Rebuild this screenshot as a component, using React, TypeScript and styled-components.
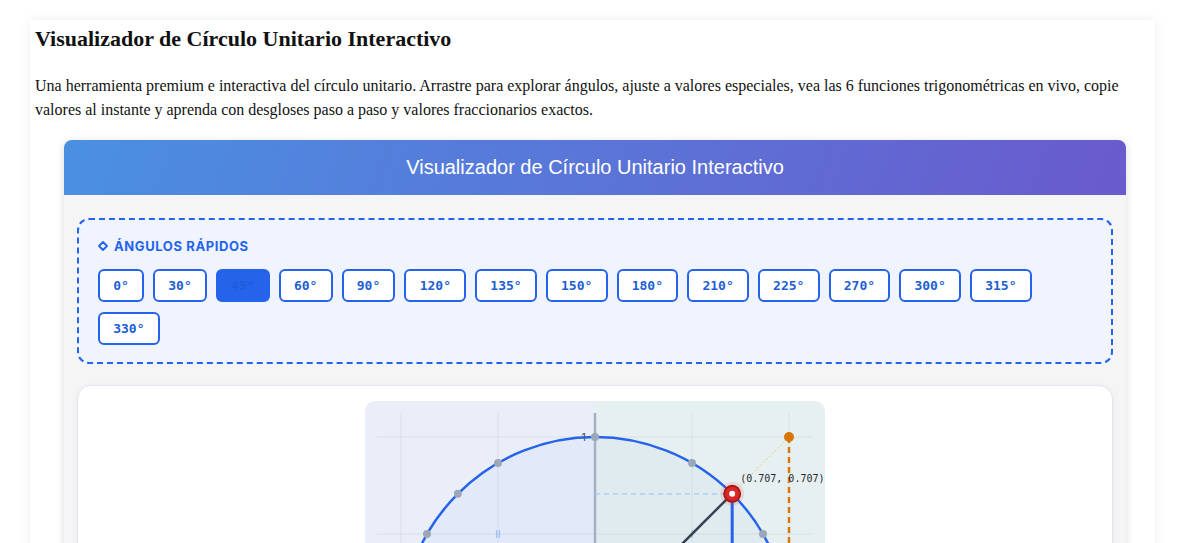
import React from 'react';
import styled, { createGlobalStyle } from 'styled-components';

const GlobalStyle = createGlobalStyle`
  html, body {
    margin: 0;
    padding: 0;
    background: #ffffff;
  }
  body {
    font-family: "Liberation Serif", "Times New Roman", serif;
    color: #111;
  }
`;

// right padding leaves room where the reference shows the page scrollbar
const Page = styled.div`
  padding: 20px 45px 40px 30px;
`;

const Article = styled.article`
  background: #fff;
  padding: 5px;
  box-shadow: 0 0 10px rgba(0, 0, 0, 0.08);
`;

const PageTitle = styled.h2`
  font-size: 22px;
  font-weight: 700;
  line-height: 27px;
  margin: 0 0 22px;
`;

const Intro = styled.p`
  font-size: 16px;
  line-height: 24px;
  margin: 0;
`;

const Widget = styled.section`
  margin: 18px 24px 0 29px;
  border-radius: 8px;
  overflow: hidden;
  background: #f5f5f5;
  box-shadow: 0 2px 8px rgba(0, 0, 0, 0.15);
`;

const Header = styled.header`
  background: linear-gradient(110deg, #4a90e2 0%, #6a5acd 100%);
  color: #fff;
  text-align: center;
  font-family: "Liberation Sans", Arial, sans-serif;
  font-size: 20px;
  line-height: 23px;
  padding: 16px;
`;

const Body = styled.div`
  padding: 23px 13px 30px;
`;

const QuickPanel = styled.div`
  border: 2px dashed #2563eb;
  border-radius: 12px;
  background: #eff4fe;
  padding: 18px 19px 17px;
`;

const QuickLabel = styled.div`
  display: flex;
  align-items: center;
  gap: 6px;
  font-family: Inter, "Noto Sans", sans-serif;
  font-weight: 700;
  font-size: 13px;
  line-height: 16px;
  letter-spacing: 0.6px;
  color: #2563eb;
  margin-bottom: 15px;
`;

const AngleGrid = styled.div`
  display: flex;
  flex-wrap: wrap;
  gap: 10px 9px;
`;

const AngleButton = styled.button<{ $active?: boolean }>`
  box-sizing: border-box;
  height: 33px;
  padding: 0 13.2px;
  border: 2px solid #2563eb;
  border-radius: 6px;
  background: ${(p) => (p.$active ? '#2563eb' : '#ffffff')};
  color: ${(p) => (p.$active ? '#1e5ddb' : '#1d5fd4')};
  font-family: "DejaVu Sans Mono", "Liberation Mono", monospace;
  font-weight: 700;
  font-size: 13px;
  cursor: pointer;
`;

const CircleCard = styled.div`
  margin-top: 21px;
  background: #fff;
  border: 1px solid #e1e5f0;
  border-radius: 14px;
  padding: 15px;
  box-shadow: 0 2px 8px rgba(0, 0, 0, 0.05);
`;

const Canvas = styled.svg`
  display: block;
  margin: 0 auto;
  border-radius: 10px;
`;

const angles = [0, 30, 45, 60, 90, 120, 135, 150, 180, 210, 225, 270, 300, 315, 330];
const special = [0, 30, 60, 90, 120, 135, 150, 180, 210, 225, 240, 270, 300, 315, 330];

const Diamond = () => (
  <svg width="10" height="10" viewBox="0 0 10 10">
    <path d="M5 1 L9 5 L5 9 L1 5 Z" fill="none" stroke="#2563eb" strokeWidth="1.8" strokeLinejoin="round" />
  </svg>
);

const UnitCircle: React.FC<{ angle: number }> = ({ angle }) => {
  const S = 460;
  const c = 230;
  const r = 194;
  const rad = (angle * Math.PI) / 180;
  const px = c + r * Math.cos(rad);
  const py = c - r * Math.sin(rad);
  const ty = c - r * Math.tan(rad);
  const grid = [c - r, c - r / 2, c + r / 2, c + r];

  return (
    <Canvas width={S} height={S} viewBox={`0 0 ${S} ${S}`}>
      <rect x="0" y="0" width={c} height={c} fill="#e9eef9" />
      <rect x={c} y="0" width={c} height={c} fill="#e7f0f1" />
      <rect x="0" y={c} width={c} height={c} fill="#f1edf9" />
      <rect x={c} y={c} width={c} height={c} fill="#f7f0e9" />

      {grid.map((g) => (
        <g key={g}>
          <line x1={g} y1="12" x2={g} y2={S - 12} stroke="rgba(148,163,184,0.18)" strokeWidth="1" />
          <line x1="12" y1={g} x2={S - 12} y2={g} stroke="rgba(148,163,184,0.18)" strokeWidth="1" />
        </g>
      ))}

      <text x={c - r / 2} y={c - r / 2 + 4} fontSize="10" fill="#93b4f5" textAnchor="middle" fontFamily="Inter, sans-serif">II</text>
      <text x={c + r / 2} y={c - r / 2 + 4} fontSize="10" fill="#8fd3b8" textAnchor="middle" fontFamily="Inter, sans-serif">I</text>
      <text x={c - r / 2} y={c + r / 2 + 4} fontSize="10" fill="#c4b5fd" textAnchor="middle" fontFamily="Inter, sans-serif">III</text>
      <text x={c + r / 2} y={c + r / 2 + 4} fontSize="10" fill="#fdba74" textAnchor="middle" fontFamily="Inter, sans-serif">IV</text>

      <circle cx={c} cy={c} r={r} fill="rgba(37,99,235,0.03)" stroke="#2563eb" strokeWidth="2.5" />

      <line x1={c} y1="12" x2={c} y2={S - 12} stroke="#a3afc2" strokeWidth="2.5" />
      <line x1="12" y1={c} x2={S - 12} y2={c} stroke="#a3afc2" strokeWidth="2.5" />
      <text x={c - 9} y={c - r + 4} fontSize="11" fill="#4b5563" textAnchor="end" fontFamily="Inter, sans-serif">1</text>
      <text x={c + r + 6} y={c + 14} fontSize="11" fill="#4b5563" fontFamily="Inter, sans-serif">1</text>

      {special.map((a) => {
        const t = (a * Math.PI) / 180;
        return <circle key={a} cx={c + r * Math.cos(t)} cy={c - r * Math.sin(t)} r="4" fill="#9ca8ba" />;
      })}

      <line x1={c} y1={py} x2={px} y2={py} stroke="#a9c8f7" strokeWidth="1.2" strokeDasharray="5 4" />
      <line x1={c} y1={c} x2={px} y2={c} stroke="#dc2626" strokeWidth="3" />
      <line x1={px} y1={py} x2={px} y2={c} stroke="#2563eb" strokeWidth="3" />
      <line x1={c} y1={c} x2={px} y2={py} stroke="#374151" strokeWidth="2.5" />

      <line x1={px} y1={py} x2={c + r} y2={ty} stroke="#f2c48d" strokeWidth="1" strokeDasharray="2 2" />
      <line x1={c + r} y1={ty} x2={c + r} y2={c} stroke="#d97706" strokeWidth="2.5" strokeDasharray="6 4" />
      <circle cx={c + r} cy={ty} r="5" fill="#d97706" />

      <circle cx={px} cy={py} r="12" fill="rgba(220,38,38,0.12)" />
      <circle cx={px} cy={py} r="8" fill="#dc2626" stroke="#a51b1b" strokeWidth="2" />
      <circle cx={px} cy={py} r="3" fill="#ffffff" />

      <text x={px + 8} y={py - 12} fontSize="10" fill="#1f2937" fontFamily="'DejaVu Sans Mono', monospace">
        ({Math.cos(rad).toFixed(3)}, {Math.sin(rad).toFixed(3)})
      </text>
    </Canvas>
  );
};

const App: React.FC = () => {
  const active = 45;
  return (
    <>
      <GlobalStyle />
      <Page>
        <Article>
          <PageTitle>Visualizador de Círculo Unitario Interactivo</PageTitle>
          <Intro>
            Una herramienta premium e interactiva del círculo unitario. Arrastre para explorar ángulos, ajuste a
            valores especiales, vea las 6 funciones trigonométricas en vivo, copie valores al instante y aprenda con
            desgloses paso a paso y valores fraccionarios exactos.
          </Intro>
          <Widget>
            <Header>Visualizador de Círculo Unitario Interactivo</Header>
            <Body>
              <QuickPanel>
                <QuickLabel>
                  <Diamond />
                  ÁNGULOS RÁPIDOS
                </QuickLabel>
                <AngleGrid>
                  {angles.map((a) => (
                    <AngleButton key={a} $active={a === active}>
                      {a}°
                    </AngleButton>
                  ))}
                </AngleGrid>
              </QuickPanel>
              <CircleCard>
                <UnitCircle angle={active} />
              </CircleCard>
            </Body>
          </Widget>
        </Article>
      </Page>
    </>
  );
};

export default App;
